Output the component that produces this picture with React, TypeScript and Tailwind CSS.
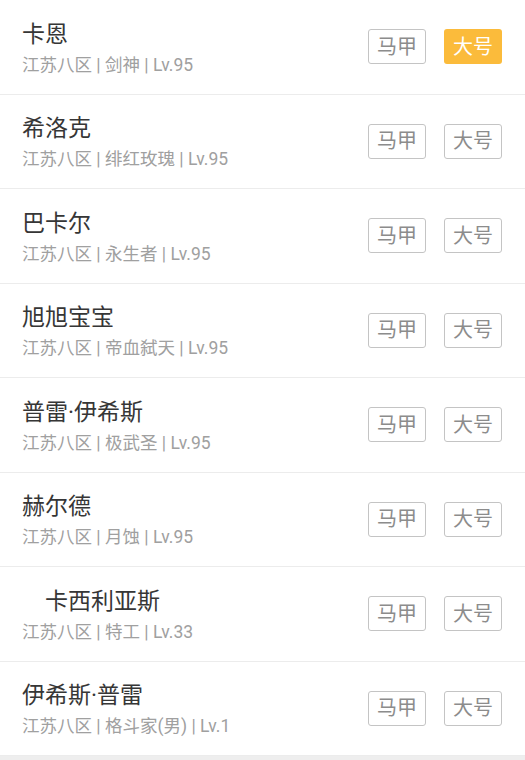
import React from 'react';

interface Role {
  name: string;
  job: string;
  level: number;
  main?: boolean;
}

const roles: Role[] = [
  { name: '卡恩', job: '剑神', level: 95, main: true },
  { name: '希洛克', job: '绯红玫瑰', level: 95 },
  { name: '巴卡尔', job: '永生者', level: 95 },
  { name: '旭旭宝宝', job: '帝血弑天', level: 95 },
  { name: '普雷·伊希斯', job: '极武圣', level: 95 },
  { name: '赫尔德', job: '月蚀', level: 95 },
  { name: '\u3000卡西利亚斯', job: '特工', level: 33 },
  { name: '伊希斯·普雷', job: '格斗家(男)', level: 1 },
];

const RoleRow: React.FC<{ role: Role }> = ({ role }) => (
  <div className="flex items-center justify-between h-[94.5px] pl-[22px] pr-[23px] border-b border-[#ececec]">
    <div className="flex flex-col pt-[6px]">
      <p className="text-[23px] leading-[30px] text-[#363636] whitespace-pre">{role.name}</p>
      <p className="text-[17.5px] leading-[30px] text-[#a0a0a0]">
        江苏八区 | {role.job} | Lv.{role.level}
      </p>
    </div>
    <div className="flex items-center gap-[18px]">
      <span className="w-[58px] h-[35px] flex items-center justify-center rounded-[3px] border border-[#c4c4c4] text-[20px] text-[#8c8c8c]">
        马甲
      </span>
      {role.main ? (
        <span className="w-[58px] h-[35px] flex items-center justify-center rounded-[3px] bg-[#fbbb3b] text-[20px] text-white">
          大号
        </span>
      ) : (
        <span className="w-[58px] h-[35px] flex items-center justify-center rounded-[3px] border border-[#c4c4c4] text-[20px] text-[#8c8c8c]">
          大号
        </span>
      )}
    </div>
  </div>
);

export default function App() {
  return (
    <div className="min-h-screen bg-[#eeeeee] font-['Roboto','Noto_Sans_CJK_SC',sans-serif]">
      <div className="bg-white">
        {roles.map((role, idx) => (
          <RoleRow key={idx} role={role} />
        ))}
      </div>
    </div>
  );
}
